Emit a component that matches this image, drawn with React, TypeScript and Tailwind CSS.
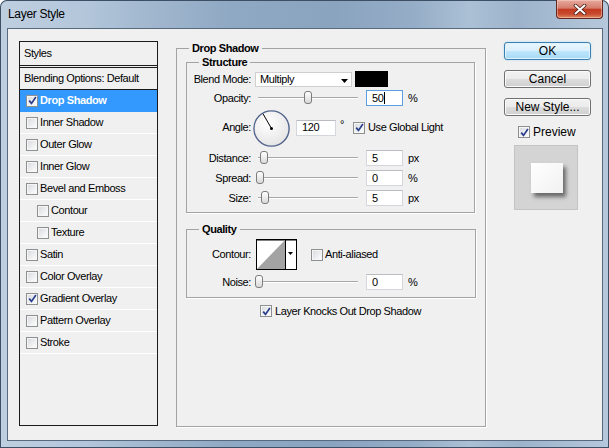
import React from "react";

const font = "font-['Liberation_Sans',Arial,Helvetica,sans-serif]";

function CheckBox({ checked = false }: { checked?: boolean }) {
  return (
    <span className="flex h-[12px] w-[12px] shrink-0 items-center justify-center border border-[#8e8f8f] bg-[linear-gradient(135deg,#d6d8dc_0%,#eef0f2_60%,#ffffff_100%)] shadow-[inset_0_0_0_1px_#f6f6f6]">
      {checked ? (
        <svg width="9" height="9" viewBox="0 0 9 9">
          <path d="M1.2 4.6 L3.5 7.4 L7.9 1.1" fill="none" stroke="#2b3e8c" strokeWidth="1.7" />
        </svg>
      ) : null}
    </span>
  );
}

function Slider({ thumb }: { thumb: number }) {
  return (
    <div className="relative ml-[3px] h-[14px] w-[104px] shrink-0">
      <div className="absolute left-[4px] right-0 top-[6px] h-[2px] border-t border-b border-t-[#a8a8a8] border-b-white" />
      <div
        className="absolute top-[0px] h-[13px] w-[8px] rounded-[3px] border border-[#7c7c7c] bg-[linear-gradient(#ffffff,#d9d9d9)]"
        style={{ left: thumb }}
      />
    </div>
  );
}

function Num({ value, wide = false, focus = false }: { value: string; wide?: boolean; focus?: boolean }) {
  return (
    <div
      className={`flex h-[16px] shrink-0 items-center bg-white pl-[5px] ${wide ? "w-[40px]" : "w-[37px]"} ${
        focus ? "border border-[#5b9fe2]" : "border border-[#d3d7dc] border-t-[#b9bdc2]"
      }`}
    >
      <span>{value}</span>
      {focus ? <span className="ml-[1px] h-[12px] w-[1px] bg-black" /> : null}
    </div>
  );
}

function Label({ children }: { children: React.ReactNode }) {
  return <div className="w-[64px] shrink-0 text-right">{children}</div>;
}

const listItems: { label: string; checked?: boolean; selected?: boolean; indent?: boolean }[] = [
  { label: "Drop Shadow", checked: true, selected: true },
  { label: "Inner Shadow" },
  { label: "Outer Glow" },
  { label: "Inner Glow" },
  { label: "Bevel and Emboss" },
  { label: "Contour", indent: true },
  { label: "Texture", indent: true },
  { label: "Satin" },
  { label: "Color Overlay" },
  { label: "Gradient Overlay", checked: true },
  { label: "Pattern Overlay" },
  { label: "Stroke" },
];

const btn =
  "flex h-[18px] w-[87px] items-center justify-center rounded-[3px] text-[12px] tracking-[0px]";

export default function App() {
  return (
    <div
      className={`${font} h-[448px] w-[609px] overflow-hidden rounded-t-[7px] bg-[linear-gradient(90deg,#bfcfe0_0%,#b3c6da_14%,#a2b8cf_24%,#8fa8c3_38%,#8aa3bf_55%,#95adc7_68%,#abc0d5_77%,#9cb3cb_85%,#b6c8db_100%)] text-[11px] leading-[13px] tracking-[-0.4px] text-black shadow-[inset_0_0_0_1px_#3d4f64]`}
    >
      {/* Title bar */}
      <div className="flex h-[28px] items-start justify-between">
        <div className="pl-[8px] pt-[7px] text-[12px] leading-[15px] tracking-[-0.3px] text-black">Layer Style</div>
        <div className="mr-[6px] flex h-[19px] w-[47px] items-center justify-center rounded-b-[4px] border border-t-0 border-[#60281f] bg-[linear-gradient(#e6aa9e_0%,#d57d6c_45%,#c23b22_52%,#c84a2d_78%,#e08a62_100%)] shadow-[inset_0_0_0_1px_rgba(255,220,210,0.45)]">
          <svg width="14" height="11" viewBox="0 0 14 11">
            <path d="M2.5 1.5 L11.5 9.5 M11.5 1.5 L2.5 9.5" stroke="#4a1a14" strokeWidth="3.6" strokeLinecap="round" />
            <path d="M2.5 1.5 L11.5 9.5 M11.5 1.5 L2.5 9.5" stroke="#ffffff" strokeWidth="2" strokeLinecap="round" />
          </svg>
        </div>
      </div>

      {/* Client area */}
      <div className="ml-[7px] flex h-[413px] w-[596px] items-start border border-[#5a6a7e] bg-[#f0f0f0]">
        {/* Left styles list */}
        <div className="ml-[11px] mt-[12px] h-[385px] w-[139px] shrink-0 border border-[#1b1b1b]">
          <div className="flex h-[24px] items-center border-b border-[#1b1b1b] pl-[4px]">Styles</div>
          <div className="h-[2px] border-b border-[#1b1b1b]" />
          <div className="flex h-[22px] items-center border-b border-[#1b1b1b] pl-[4px]">Blending Options: Default</div>
          {listItems.map((it) => (
            <div
              key={it.label}
              className={`flex h-[22px] items-center border-b ${
                it.selected ? "border-[#3399ff] bg-[#3399ff] font-bold text-white" : "border-white"
              } ${it.indent ? "pl-[17px]" : "pl-[6px]"}`}
            >
              <CheckBox checked={it.checked} />
              <span className="ml-[2px]">{it.label}</span>
            </div>
          ))}
        </div>

        {/* Main panel */}
        <fieldset className="ml-[18px] mt-[13px] h-[385px] w-[310px] shrink-0 border border-[#a3a3a3] shadow-[1px_1px_0_#ffffff]">
          <legend className="ml-[12px] px-[3px] font-bold leading-[13px]">Drop Shadow</legend>
          <div className="pl-[9px]">
            {/* Structure */}
            <fieldset className="mt-[1px] h-[157px] w-[289px] border border-[#a3a3a3] shadow-[1px_1px_0_#ffffff]">
              <legend className="ml-[12px] px-[3px] font-bold leading-[13px]">Structure</legend>
              <div className="flex h-[20px] items-center">
                <Label>Blend Mode:</Label>
                <div className="ml-[4px] flex h-[15px] w-[97px] items-center justify-between border border-[#cfcfcf] bg-white pl-[4px] pr-[3px]">
                  <span>Multiply</span>
                  <svg width="7" height="4" viewBox="0 0 7 4" className="mt-[3px]">
                    <polygon points="0,0 7,0 3.5,4" fill="#000" />
                  </svg>
                </div>
                <div className="ml-[3px] h-[16px] w-[33px] bg-black" />
              </div>
              <div className="flex h-[18px] items-center">
                <Label>Opacity:</Label>
                <Slider thumb={50} />
                <div className="ml-[8px]">
                  <Num value="50" focus />
                </div>
                <span className="ml-[5px]">%</span>
              </div>
              <div className="flex h-[41px] items-center">
                <Label>Angle:</Label>
                <svg width="37" height="37" viewBox="0 0 37 37" className="ml-[2px] shrink-0 self-start mt-[3px]">
                  <defs>
                    <radialGradient id="dialg" cx="40%" cy="35%" r="70%">
                      <stop offset="0" stopColor="#ffffff" />
                      <stop offset="1" stopColor="#e4e4e4" />
                    </radialGradient>
                  </defs>
                  <circle cx="18.5" cy="18.5" r="17.6" fill="url(#dialg)" stroke="#52638c" strokeWidth="1.4" />
                  <line x1="18.5" y1="18.5" x2="10" y2="3.8" stroke="#000" strokeWidth="1" />
                  <circle cx="18.5" cy="18.5" r="1.5" fill="#000" />
                </svg>
                <div className="ml-[6px]">
                  <Num value="120" wide />
                </div>
                <span className="ml-[4px] w-[13px] -mt-[6px] shrink-0">°</span>
                <CheckBox checked />
                <span className="ml-[3px]">Use Global Light</span>
              </div>
              <div className="flex h-[20px] items-center">
                <Label>Distance:</Label>
                <Slider thumb={6} />
                <div className="ml-[8px]">
                  <Num value="5" />
                </div>
                <span className="ml-[5px]">px</span>
              </div>
              <div className="flex h-[20px] items-center">
                <Label>Spread:</Label>
                <Slider thumb={2} />
                <div className="ml-[8px]">
                  <Num value="0" />
                </div>
                <span className="ml-[5px]">%</span>
              </div>
              <div className="flex h-[20px] items-center">
                <Label>Size:</Label>
                <Slider thumb={7} />
                <div className="ml-[8px]">
                  <Num value="5" />
                </div>
                <span className="ml-[5px]">px</span>
              </div>
            </fieldset>

            {/* Quality */}
            <fieldset className="mt-[10px] h-[75px] w-[290px] border border-[#a3a3a3] shadow-[1px_1px_0_#ffffff]">
              <legend className="ml-[12px] px-[3px] font-bold leading-[13px]">Quality</legend>
              <div className="flex h-[37px] items-center">
                <Label>Contour:</Label>
                <svg width="41" height="31" viewBox="0 0 41 31" className="ml-[5px] shrink-0">
                  <rect x="0.5" y="0.5" width="40" height="30" fill="#ffffff" stroke="#000" />
                  <line x1="0" y1="1" x2="41" y2="1" stroke="#000" strokeWidth="1" />
                  <polygon points="1,30 29,1 29,30" fill="#a3a3a3" />
                  <line x1="29.5" y1="0" x2="29.5" y2="31" stroke="#000" />
                  <polygon points="32,13 37,13 34.5,16" fill="#000" />
                </svg>
                <div className="ml-[14px]">
                  <CheckBox />
                </div>
                <span className="ml-[2px]">Anti-aliased</span>
              </div>
              <div className="flex h-[18px] items-center">
                <Label>Noise:</Label>
                <Slider thumb={1} />
                <div className="ml-[8px]">
                  <Num value="0" />
                </div>
                <span className="ml-[5px]">%</span>
              </div>
            </fieldset>

            <div className="ml-[74px] mt-[5px] flex h-[16px] items-center">
              <CheckBox checked />
              <span className="ml-[3px]">Layer Knocks Out Drop Shadow</span>
            </div>
          </div>
        </fieldset>

        {/* Right column */}
        <div className="ml-[18px] mt-[13px] flex w-[87px] shrink-0 flex-col">
          <div
            className={`${btn} border border-[#3c7fb1] bg-[linear-gradient(#eaf6fd_0%,#d9f0fc_50%,#bee6fd_51%,#a7d9f5_100%)] shadow-[inset_0_0_0_1px_#dff3fe,0_0_2px_#9fd5f3]`}
          >
            OK
          </div>
          <div
            className={`${btn} mt-[10px] border border-[#707070] bg-[linear-gradient(#f2f2f2_0%,#ebebeb_50%,#dddddd_51%,#cfcfcf_100%)] shadow-[inset_0_0_0_1px_#fbfbfb]`}
          >
            Cancel
          </div>
          <div
            className={`${btn} mt-[10px] border border-[#707070] bg-[linear-gradient(#f2f2f2_0%,#ebebeb_50%,#dddddd_51%,#cfcfcf_100%)] shadow-[inset_0_0_0_1px_#fbfbfb]`}
          >
            New Style...
          </div>
          <div className="mt-[8px] flex h-[16px] items-center pl-[14px] text-[12px] tracking-[0px]">
            <CheckBox checked />
            <span className="ml-[3px]">Preview</span>
          </div>
          <div className="ml-[10px] mt-[5px] h-[65px] w-[64px] border border-[#c4c4c4] bg-[#d4d4d4] pl-[16px] pt-[17px]">
            <div className="h-[30px] w-[32px] bg-[linear-gradient(135deg,#ffffff,#f1f1f1)] shadow-[3px_4px_4px_rgba(0,0,0,0.5)]" />
          </div>
        </div>
      </div>
    </div>
  );
}
